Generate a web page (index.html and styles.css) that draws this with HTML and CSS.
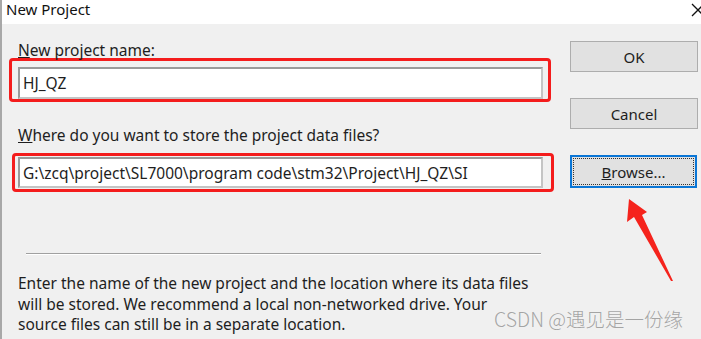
FILE: index.html
```html
<!DOCTYPE html>
<html lang="en">

<head>
    <meta charset="UTF-8">
    <meta name="viewport" content="width=device-width, initial-scale=1.0">
    <title>New Project</title>
    <link rel="stylesheet" href="styles.css">
</head>

<body>
    <div class="window">
        <header class="titlebar">
            <span class="title">New Project</span>
            <svg class="close" width="16" height="16" viewBox="0 0 16 16">
                <path d="M2 2 L14 14 M14 2 L2 14" stroke="#111" stroke-width="1.3" fill="none" />
            </svg>
        </header>

        <main class="dialog">
            <section class="fields">
                <label class="label label-name" for="name"><u>N</u>ew project name:</label>
                <div class="mark mark-name">
                    <input id="name" class="field" type="text" value="HJ_QZ">
                </div>

                <label class="label label-path" for="path"><u>W</u>here do you want to store the project data files?</label>
                <div class="mark mark-path">
                    <input id="path" class="field" type="text" value="G:\zcq\project\SL7000\program code\stm32\Project\HJ_QZ\SI">
                </div>

                <hr class="rule">

                <p class="note">Enter the name of the new project and the location where its data files<br>
                    will be stored. We recommend a local non-networked drive. Your<br>
                    source files can still be in a separate location.</p>
            </section>

            <aside class="buttons">
                <button class="btn">OK</button>
                <button class="btn">Cancel</button>
                <button class="btn btn-focus"><u>B</u>rowse...</button>
            </aside>
        </main>

        <svg class="arrow" width="101" height="110" viewBox="0 0 101 110">
            <polygon points="29,19 47,32 42,35 73,101 71,101 34,37 27,42" fill="#f5231c" />
        </svg>

        <div class="watermark">CSDN @遇见是一份缘</div>
    </div>
</body>

</html>
```

FILE: styles.css
```css
*,
*::before,
*::after {
    box-sizing: border-box;
}

html,
body {
    margin: 0;
    padding: 0;
}

body {
    width: 701px;
    height: 339px;
    overflow: hidden;
    background: #f0f0f0;
    font-family: "Noto Sans", "Open Sans", sans-serif;
    color: #1e1e1e;
}

.window {
    position: relative;
    height: 339px;
    border-left: 2px solid #a8a8a8;
}

.titlebar {
    height: 24px;
    background: #fff;
    display: flex;
    justify-content: space-between;
    align-items: flex-start;
    padding-left: 4px;
    overflow: visible;
}

.title {
    font-size: 15px;
    line-height: 18px;
    color: #111;
}

.close {
    margin-top: 2px;
    margin-right: -5px;
}

.dialog {
    display: flex;
    padding-left: 7px;
    gap: 18px;
}

.fields {
    width: 543px;
    padding-top: 18px;
}

.label {
    display: block;
    font-size: 15.5px;
    line-height: 16px;
    padding-left: 9px;
}

.mark {
    border: 3px solid #f41c1c;
    border-radius: 4px;
}

.mark-name {
    width: 542px;
    padding: 6px 4px 0 6px;
    height: 44px;
}

.label-path {
    margin-top: 25px;
}

.mark-path {
    width: 542px;
    margin-left: 3px;
    margin-top: 10px;
    padding: 1px 7px 0 3px;
    height: 39px;
}

.field {
    display: block;
    width: 525px;
    height: 32px;
    margin: 0;
    padding: 0 3px;
    font-family: inherit;
    font-size: 15.5px;
    color: #1e1e1e;
    background: #fff;
    border: 2px solid;
    border-color: #9a9a9a #c4c4c4 #c4c4c4 #9a9a9a;
    outline: none;
}

.mark-path .field {
    height: 31px;
}

.rule {
    width: 515px;
    margin: 61px 0 0 17px;
    border: 0;
    border-top: 1px solid #a0a0a0;
    border-bottom: 1px solid #fff;
}

.note {
    margin: 18px 0 0 9px;
    font-size: 15.5px;
    line-height: 20.5px;
}

.buttons {
    display: flex;
    flex-direction: column;
    gap: 26px;
    padding-top: 17px;
    width: 128px;
}

.btn {
    height: 31px;
    background: #e1e1e1;
    border: 1px solid #adadad;
    font-family: inherit;
    font-size: 15px;
    color: #1e1e1e;
    padding: 0;
}

.btn-focus {
    height: 33px;
    width: 127px;
    border: 2px solid #0a76d6;
    outline: 1px dotted #333;
    outline-offset: -4px;
}

.arrow {
    position: absolute;
    left: 598px;
    top: 180px;
}

.watermark {
    position: absolute;
    left: 492px;
    top: 304px;
    font-family: "Noto Sans CJK SC", sans-serif;
    font-size: 19.5px;
    font-weight: 300;
    color: rgba(150, 150, 150, 0.85);
    white-space: nowrap;
}
```
